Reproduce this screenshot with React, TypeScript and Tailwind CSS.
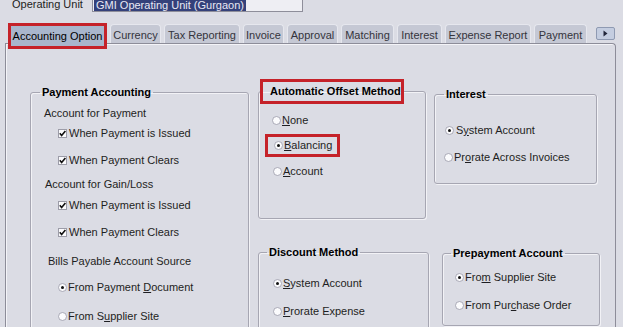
import React from "react";

const Mn = ({ text, at }: { text: string; at?: number }) => {
  if (at === undefined) return <>{text}</>;
  return (
    <>
      {text.slice(0, at)}
      <span className="underline underline-offset-[1px]">{text[at]}</span>
      {text.slice(at + 1)}
    </>
  );
};

const Radio = ({ on }: { on?: boolean }) => (
  <svg width="9" height="9" viewBox="0 0 9 9" className="shrink-0">
    <circle cx="4.5" cy="4.5" r="4" fill="#fbfbfd" stroke="#a2a2ae" strokeWidth="0.9" />
    {on && <circle cx="4.5" cy="4.5" r="1.5" fill="#111" />}
  </svg>
);

const Check = () => (
  <svg width="9" height="9" viewBox="0 0 9 9" className="shrink-0">
    <rect x="0.5" y="0.5" width="8" height="8" fill="#fbfbfd" stroke="#9c9ca8" />
    <path d="M1.8 4.3 L3.6 6.4 L7.4 1.9" fill="none" stroke="#111" strokeWidth="1.6" />
  </svg>
);

const tabs = [
  { t: "Currency", w: "w-[51px]" },
  { t: "Tax Reporting", w: "w-[76px]" },
  { t: "Invoice", w: "w-[41px]" },
  { t: "Approval", w: "w-[51px]" },
  { t: "Matching", w: "w-[53px]" },
  { t: "Interest", w: "w-[45px]" },
  { t: "Expense Report", w: "w-[86px]" },
  { t: "Payment", w: "w-[53px]" },
];

const box =
  "border border-[#a6a6b2] rounded-[3px] shadow-[inset_1px_1px_0_#f2f2f6,1px_1px_0_#f2f2f6]";
const legend = "px-[2px] leading-[13px] font-bold text-black";

const CheckRow = ({ label, mt }: { label: string; mt: string }) => (
  <div className={`flex items-center gap-[2px] pl-[27px] h-[13px] ${mt}`}>
    <Check />
    <span>{label}</span>
  </div>
);

const RadioRow = ({
  label,
  at,
  on,
  cls,
}: {
  label: string;
  at?: number;
  on?: boolean;
  cls: string;
}) => (
  <div className={`flex items-center h-[13px] ${cls}`}>
    <Radio on={on} />
    <span>
      <Mn text={label} at={at} />
    </span>
  </div>
);

export default function App() {
  return (
    <div
      className="w-[623px] h-[327px] overflow-hidden bg-[#dbdce4] text-[11px] text-[#1e1e22]"
      style={{ fontFamily: '"Liberation Sans", Arial, sans-serif' }}
    >
      {/* operating unit */}
      <div className="flex items-start h-[15px] -mt-[3px]">
        <span className="ml-[12px] w-[80px] leading-[15px]">Operating Unit</span>
        <div className="w-[211px] h-[15px] border border-[#8e8e9a] bg-[#eeeef3] flex items-end pl-[1px]">
          <span className="bg-[#34417a] text-[#e8e8f4] leading-[12px] px-[2px]">
            GMI Operating Unit (Gurgaon)
          </span>
        </div>
      </div>

      {/* tabs */}
      <div className="flex items-start gap-[3px] h-[20px] mt-[11px] pl-[8px]">
        <div className="relative z-10 w-[99px] h-[26px] border-[3px] border-[#c52229] bg-[#a9b6cc] flex items-center justify-center text-black leading-[13px] pt-[1px]">
          Accounting Option
        </div>
        {tabs.map((tb) => (
          <div
            key={tb.t}
            className={`${tb.w} h-[19px] mt-[1px] pt-[2px] rounded-t-[4px] bg-[#c5c8d4] border border-b-0 border-[#e6e7ee] flex items-center justify-center text-[#34343c]`}
          >
            {tb.t}
          </div>
        ))}
        <div className="ml-[6px] mt-[4px] w-[19px] h-[13px] rounded-[2px] border border-[#8f9ab2] bg-[#c4cde0] flex items-center justify-center">
          <svg width="5" height="7" viewBox="0 0 5 7">
            <path d="M0.5 0.5 L4.5 3.5 L0.5 6.5 Z" fill="#22263a" />
          </svg>
        </div>
      </div>

      {/* panel */}
      <div className="ml-[5px] w-[611px] h-[300px] border border-b-0 border-[#8d8d99] rounded-tr-[4px] shadow-[inset_1px_1px_0_#f4f4f8] flex items-start">
        {/* column 1 */}
        <fieldset className={`ml-[24px] mt-[42px] w-[219px] h-[260px] ${box}`}>
          <legend className={`ml-[9px] ${legend}`}>Payment Accounting</legend>
          <div className="flex flex-col">
            <div className="pl-[13px] h-[13px] leading-[13px] mt-[8px]">Account for Payment</div>
            <CheckRow label="When Payment is Issued" mt="mt-[7px]" />
            <CheckRow label="When Payment Clears" mt="mt-[14px]" />
            <div className="pl-[14px] h-[13px] leading-[13px] mt-[11px]">Account for Gain/Loss</div>
            <CheckRow label="When Payment is Issued" mt="mt-[8px]" />
            <CheckRow label="When Payment Clears" mt="mt-[14px]" />
            <div className="pl-[17px] h-[13px] leading-[13px] mt-[16px]">Bills Payable Account Source</div>
            <RadioRow label="From Payment Document" at={13} on cls="mt-[13px] pl-[27px] gap-[1px]" />
            <RadioRow label="From Supplier Site" at={6} cls="mt-[16px] pl-[27px] gap-[1px]" />
          </div>
        </fieldset>

        {/* column 2 */}
        <div className="ml-[9px] flex flex-col">
          <fieldset className={`mt-[35px] w-[168px] h-[140px] ${box}`}>
            <legend className="ml-[1px] w-[144px] h-[25px] border-[3px] border-[#c52229] pl-[7px] leading-[19px] font-bold text-black">
              Automatic Offset Method
            </legend>
            <div className="flex flex-col">
              <RadioRow label="None" at={0} cls="mt-[10px] pl-[13px] gap-[1px]" />
              <div className="ml-[6px] mt-[7px] w-[75px] h-[23px] border-[3px] border-[#c52229] flex items-center pl-[6px] gap-[1px]">
                <Radio on />
                <span>
                  <Mn text="Balancing" at={0} />
                </span>
              </div>
              <RadioRow label="Account" at={0} cls="mt-[8px] pl-[14px] gap-[1px]" />
            </div>
          </fieldset>
          <fieldset className={`mt-[27px] w-[171px] h-[100px] ${box}`}>
            <legend className={`ml-[8px] ${legend}`}>Discount Method</legend>
            <div className="flex flex-col">
              <RadioRow label="System Account" at={0} on cls="mt-[18px] pl-[14px] gap-[1px]" />
              <RadioRow label="Prorate Expense" at={0} cls="mt-[15px] pl-[14px] gap-[1px]" />
            </div>
          </fieldset>
        </div>

        {/* column 3 */}
        <div className="ml-[5px] flex flex-col">
          <fieldset className={`mt-[44px] w-[163px] h-[96px] ${box}`}>
            <legend className={`ml-[9px] ${legend}`}>Interest</legend>
            <div className="flex flex-col">
              <RadioRow label="System Account" at={1} on cls="mt-[23px] pl-[10px] gap-[2px]" />
              <RadioRow label="Prorate Across Invoices" at={2} cls="mt-[14px] pl-[9px] gap-[1px]" />
            </div>
          </fieldset>
          <fieldset className={`ml-[8px] mt-[63px] w-[158px] h-[79px] ${box}`}>
            <legend className={`ml-[8px] ${legend}`}>Prepayment Account</legend>
            <div className="flex flex-col">
              <RadioRow label="From Supplier Site" at={3} on cls="mt-[11px] pl-[12px] gap-[1px]" />
              <RadioRow label="From Purchase Order" at={8} cls="mt-[15px] pl-[12px] gap-[1px]" />
            </div>
          </fieldset>
        </div>
      </div>
    </div>
  );
}
